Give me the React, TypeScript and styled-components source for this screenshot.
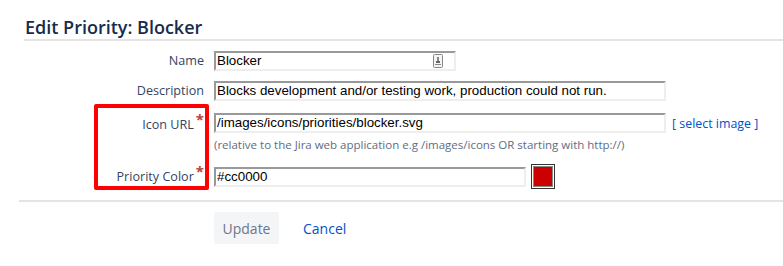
import styled, { createGlobalStyle } from 'styled-components'

const Global = createGlobalStyle`
  body {
    margin: 0;
    background: #fff;
    font-family: "Open Sans", "Noto Sans", sans-serif;
  }
`

const Page = styled.div`
  position: relative;
  width: 783px;
  height: 266px;
  padding-top: 15px;
  box-sizing: border-box;
`

const Heading = styled.h2`
  margin: 0 0 0 24px;
  padding: 0 0 0 1px;
  font-size: 18px;
  font-weight: 600;
  line-height: 24px;
  color: #172b4d;
  border-bottom: 2px solid #e4e4e4;
`

const Form = styled.form`
  margin: 10px 0 0 19px;
`

const Row = styled.div<{ $gap?: number }>`
  display: flex;
  align-items: flex-start;
  margin-bottom: ${p => p.$gap ?? 10}px;
`

const Label = styled.label`
  width: 185px;
  flex: none;
  padding-right: 10px;
  text-align: right;
  font-size: 12.6px;
  line-height: 20px;
  color: #344563;
  white-space: nowrap;
`

const Req = styled.span`
  color: #b5433a;
  font-size: 15px;
  font-weight: 700;
  margin-left: 2px;
  position: relative;
  top: -4px;
`

const Field = styled.div`
  display: flex;
  flex-direction: column;
`

const Line = styled.div`
  display: flex;
  align-items: center;
  gap: 5px;
`

const InputBox = styled.div<{ $w: number }>`
  position: relative;
  width: ${p => p.$w}px;
  height: 20px;
  box-sizing: border-box;
  border-style: solid;
  border-width: 2px;
  border-color: #999 #eee #eee #999;
  font-family: "Liberation Sans", Arial, sans-serif;
  font-size: 13.33px;
  line-height: 16px;
  color: #000;
  padding-left: 1px;
  white-space: nowrap;
  overflow: hidden;
`

const KeyIcon = styled.svg`
  position: absolute;
  right: 11px;
  top: 1px;
`

const Link = styled.a`
  color: #0052cc;
  font-size: 12.4px;
  text-decoration: none;
  margin-left: 1px;
`

const Hint = styled.div`
  font-size: 11.5px;
  line-height: 16px;
  color: #5e6c84;
  margin-top: 4px;
`

const Swatch = styled.div`
  width: 24px;
  height: 25px;
  box-sizing: border-box;
  border: 1px solid #333;
  padding: 2px;
  background: #fff;
  margin-top: -1px;
  div {
    width: 100%;
    height: 100%;
    background: #cc0000;
    outline: 1px solid #888;
  }
`

const Footer = styled.div`
  border-top: 2px solid #e4e4e4;
  margin-top: 11px;
  padding: 10px 0 0 195px;
  display: flex;
  align-items: center;
  gap: 24px;
`

const Button = styled.button`
  width: 65px;
  height: 32px;
  border: none;
  border-radius: 3px;
  background: #f4f5f7;
  color: #6b778c;
  font-family: inherit;
  font-size: 14px;
  padding: 0;
`

const Cancel = styled.a`
  color: #0052cc;
  font-size: 14px;
  text-decoration: none;
`

const Highlight = styled.div`
  position: absolute;
  left: 94px;
  top: 104px;
  width: 115px;
  height: 86px;
  box-sizing: border-box;
  border: 4px solid #ff0000;
  border-radius: 2px;
  pointer-events: none;
`

export default function App() {
  return (
    <>
      <Global />
      <Page>
        <Heading>Edit Priority: Blocker</Heading>
        <Form>
          <Row>
            <Label>Name</Label>
            <InputBox $w={242}>
              Blocker
              <KeyIcon width="10" height="14" viewBox="0 0 10 14">
                <rect x="0.5" y="0.5" width="9" height="13" rx="1" fill="#f4f4f4" stroke="#888" />
                <path d="M5 3 L5 7" stroke="#666" strokeWidth="1.5" />
                <rect x="3" y="7" width="4" height="2" fill="#666" />
                <rect x="2" y="10" width="6" height="1" fill="#888" />
              </KeyIcon>
            </InputBox>
          </Row>
          <Row $gap={12}>
            <Label>Description</Label>
            <InputBox $w={452}>Blocks development and/or testing work, production could not run.</InputBox>
          </Row>
          <Row $gap={12}>
            <Label>
              Icon URL<Req>*</Req>
            </Label>
            <Field>
              <Line>
                <InputBox $w={452}>/images/icons/priorities/blocker.svg</InputBox>
                <Link href="#">[ select image ]</Link>
              </Line>
              <Hint>(relative to the Jira web application e.g /images/icons OR starting with http://)</Hint>
            </Field>
          </Row>
          <Row $gap={0}>
            <Label>
              Priority Color<Req>*</Req>
            </Label>
            <Line>
              <InputBox $w={312}>#cc0000</InputBox>
              <Swatch>
                <div />
              </Swatch>
            </Line>
          </Row>
          <Footer>
            <Button type="button">Update</Button>
            <Cancel href="#">Cancel</Cancel>
          </Footer>
        </Form>
        <Highlight />
      </Page>
    </>
  )
}
